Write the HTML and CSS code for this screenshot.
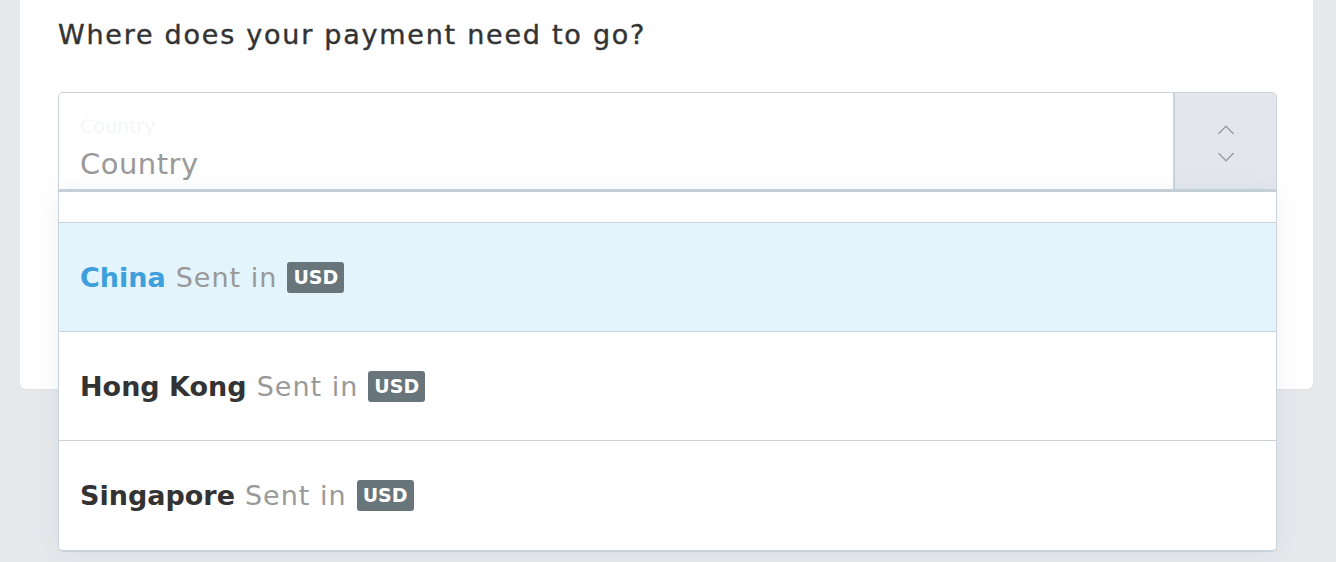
FILE: index.html
```html
<!DOCTYPE html>
<html lang="en">

<head>
    <meta charset="UTF-8">
    <meta name="viewport" content="width=device-width, initial-scale=1.0">
    <title>Payment Destination</title>
    <link rel="stylesheet" href="styles.css">
</head>

<body>
    <div class="page">
        <div class="card">
            <h2 class="question">Where does your payment need to go?</h2>

            <div class="country-field">
                <div class="select-box">
                    <div class="select-input">
                        <span class="float-label">Country</span>
                        <span class="placeholder">Country</span>
                    </div>
                    <div class="select-arrows">
                        <svg width="16" height="37" viewBox="0 0 16 37" fill="none" stroke="#9a9ea3" stroke-width="1.4" stroke-linecap="round" stroke-linejoin="round">
                            <path d="M0.8 8.5 L8 1.2 L15.2 8.5" />
                            <path d="M0.8 28.5 L8 35.8 L15.2 28.5" />
                        </svg>
                    </div>
                </div>

                <ul class="dropdown">
                    <li class="spacer"></li>
                    <li class="option active">
                        <span class="name">China</span>
                        <span class="sent">Sent in</span>
                        <span class="badge">USD</span>
                    </li>
                    <li class="option">
                        <span class="name">Hong Kong</span>
                        <span class="sent">Sent in</span>
                        <span class="badge">USD</span>
                    </li>
                    <li class="option">
                        <span class="name">Singapore</span>
                        <span class="sent">Sent in</span>
                        <span class="badge">USD</span>
                    </li>
                </ul>
            </div>
        </div>
    </div>
</body>

</html>
```

FILE: styles.css
```css
/* Reset */
* {
    margin: 0;
    padding: 0;
    box-sizing: border-box;
}

body {
    background: #e6e9ec;
    color: #333;
    font-family: 'DejaVu Sans', 'Liberation Sans', sans-serif;
    min-height: 100vh;
}

.page {
    padding: 0 23px 0 20px;
}

/* Card */
.card {
    background: #fff;
    border-radius: 0 0 6px 6px;
    padding: 19px 36px 0 38px;
    height: 389px;
    box-shadow: 0 1px 2px rgba(0, 0, 0, 0.04);
}

.question {
    font-size: 27px;
    font-weight: 400;
    letter-spacing: 1.75px;
    -webkit-text-stroke: 0.4px #333;
    color: #333;
    line-height: 32px;
    margin-bottom: 41px;
}

/* Select */
.country-field {
    position: relative;
}

.select-box {
    display: flex;
    height: 100px;
    border: 1px solid #c9d3db;
    border-bottom-width: 3px;
    border-radius: 5px 5px 0 0;
    overflow: hidden;
}

.select-input {
    flex: 1;
    display: flex;
    flex-direction: column;
    padding: 22px 21px 0;
}

.float-label {
    font-size: 19px;
    line-height: 22px;
    color: #f5f6f8;
}

.placeholder {
    font-size: 29px;
    letter-spacing: 0.5px;
    line-height: 34px;
    margin-top: 10px;
    color: #999;
}

.select-arrows {
    width: 103px;
    background: #e3e7ed;
    border-left: 2px solid #c9d3db;
    display: flex;
    align-items: center;
    justify-content: center;
    padding-top: 4px;
}

/* Dropdown menu */
.dropdown {
    position: absolute;
    top: 100px;
    left: 0;
    right: 0;
    list-style: none;
    background: #fff;
    border: 1px solid #c9d3db;
    border-top: none;
    border-bottom-width: 2px;
    border-radius: 0 0 5px 5px;
    box-shadow: 0 0 24px rgba(60, 80, 100, 0.08);
    overflow: hidden;
}

.dropdown li {
    border-bottom: 1px solid #c9d3db;
}

.dropdown li:last-child {
    border-bottom: none;
}

.spacer {
    height: 31px;
}

.option {
    height: 109px;
    display: flex;
    align-items: center;
    gap: 10px;
    padding: 0 21px;
    font-size: 27px;
}

.option .name {
    font-weight: 700;
    color: #333;
}

.option .sent {
    color: #999;
    letter-spacing: 1px;
}

.option.active {
    background: #e3f4fc;
}

.option.active .name {
    color: #3d9fdb;
}

.badge {
    background: #68757a;
    color: #fff;
    font-size: 19px;
    font-weight: 700;
    line-height: 31px;
    padding: 0 6px;
    border-radius: 3px;
}
```
